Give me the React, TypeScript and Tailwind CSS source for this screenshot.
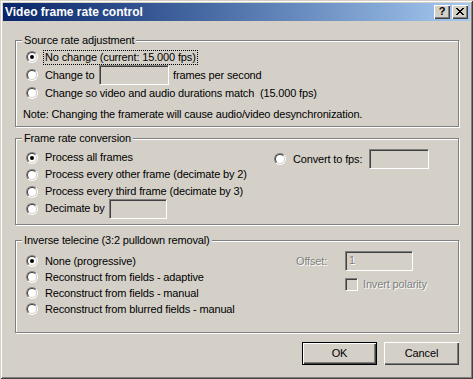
import type { ReactNode } from 'react'

const raised = 'shadow-[inset_1px_1px_0_#fff,inset_-1px_-1px_0_#404040,inset_-2px_-2px_0_#808080]'
const sunken = 'border border-t-[#808080] border-l-[#808080] border-r-white border-b-white shadow-[inset_1px_1px_0_#404040,inset_-1px_-1px_0_#d4d0c8]'
const disabledText = 'text-[#808080] [text-shadow:1px_1px_0_#fff]'

function Radio({ checked = false }: { checked?: boolean }) {
  return (
    <span className="flex h-[12px] w-[12px] shrink-0 rounded-full border border-t-[#808080] border-l-[#808080] border-r-white border-b-white">
      <span className="flex flex-1 items-center justify-center rounded-full border border-t-[#404040] border-l-[#404040] border-r-[#d4d0c8] border-b-[#d4d0c8] bg-white">
        {checked && <span className="h-[4px] w-[4px] rounded-full bg-black" />}
      </span>
    </span>
  )
}

interface ChoiceProps {
  label: string
  checked?: boolean
  focused?: boolean
  labelClass?: string
  className?: string
  children?: ReactNode
}

function Choice({ label, checked, focused, labelClass = '', className = 'h-[18px]', children }: ChoiceProps) {
  return (
    <div className={`flex items-center ${className}`}>
      <Radio checked={checked} />
      <span
        className={`ml-[5px] whitespace-pre border px-[1px] leading-[13px] ${focused ? 'border-dotted border-black' : 'border-transparent'} ${labelClass}`}
      >
        {label}
      </span>
      {children}
    </div>
  )
}

function TextBox({ className = '', value = '' }: { className?: string; value?: string }) {
  return (
    <div className={`h-[20px] shrink-0 bg-[#d4d0c8] pl-[3px] leading-[17px] ${sunken} ${className}`}>
      {value}
    </div>
  )
}

function Group({ title, className = '', children }: { title: string; className?: string; children: ReactNode }) {
  return (
    <fieldset className={`border border-[#808080] shadow-[1px_1px_0_#fff,inset_1px_1px_0_#fff] ${className}`}>
      <legend className="ml-[6px] bg-[#d4d0c8] px-[2px] leading-[13px]">{title}</legend>
      {children}
    </fieldset>
  )
}

export default function App() {
  return (
    <div className="h-[379px] w-[473px] overflow-hidden bg-[#d4d0c8] p-[3px] font-['Liberation_Sans',Arial,sans-serif] text-[11px] leading-[13px] tracking-[-0.15px] text-black shadow-[inset_1px_1px_0_#d4d0c8,inset_-1px_-1px_0_#404040,inset_2px_2px_0_#fff,inset_-2px_-2px_0_#808080]">
      {/* title bar */}
      <div className="flex h-[18px] items-center justify-between bg-linear-to-r from-[#0a246a] to-[#a6caf0] pl-[2px] pr-[2px]">
        <span className="text-[12px] font-bold tracking-normal text-white">Video frame rate control</span>
        <div className="flex gap-[2px]">
          <div className={`flex h-[14px] w-[16px] items-center justify-center bg-[#d4d0c8] pb-[1px] text-[11px] font-bold leading-none ${raised}`}>
            ?
          </div>
          <div className={`flex h-[14px] w-[16px] items-center justify-center bg-[#d4d0c8] pb-[1px] ${raised}`}>
            <svg width="8" height="7" viewBox="0 0 8 7" shapeRendering="crispEdges">
              <path d="M0 0h2l2 2.5L6 0h2L5 3.5 8 7H6L4 4.5 2 7H0l3-3.5z" fill="#000" />
            </svg>
          </div>
        </div>
      </div>

      <div className="pl-[12px] pr-[11px] pt-[13px]">
        <Group title="Source rate adjustment">
          <div className="pl-[10px] pt-[1px]">
            <Choice checked focused label="No change (current: 15.000 fps)" />
            <Choice label="Change to" labelClass="w-[56px]">
              <TextBox className="w-[70px]" />
              <span className="ml-[4px]">frames per second</span>
            </Choice>
            <Choice label="Change so video and audio durations match  (15.000 fps)" />
            <div className="-ml-[3px] flex h-[24px] items-center">
              Note: Changing the framerate will cause audio/video desynchronization.
            </div>
          </div>
        </Group>

        <Group title="Frame rate conversion" className="mt-[5px]">
          <div className="flex pb-[7px] pl-[10px] pt-[4px]">
            <div className="w-[248px]">
              <Choice className="h-[17px]" checked label="Process all frames" />
              <Choice className="h-[17px]" label="Process every other frame (decimate by 2)" />
              <Choice className="h-[17px]" label="Process every third frame (decimate by 3)" />
              <Choice className="h-[17px]" label="Decimate by" labelClass="w-[66px]">
                <TextBox className="w-[58px]" />
              </Choice>
            </div>
            <div>
              <Choice className="h-[20px]" label="Convert to fps:" labelClass="w-[78px]">
                <TextBox className="w-[60px]" />
              </Choice>
            </div>
          </div>
        </Group>

        <Group title="Inverse telecine (3:2 pulldown removal)" className="mt-[9px]">
          <div className="flex pb-[15px] pl-[10px]">
            <div className="w-[270px] pt-[6px]">
              <Choice className="h-[16px]" checked label="None (progressive)" />
              <Choice className="h-[16px]" label="Reconstruct from fields - adaptive" />
              <Choice className="h-[16px]" label="Reconstruct from fields - manual" />
              <Choice className="h-[16px]" label="Reconstruct from blurred fields - manual" />
            </div>
            <div className="pt-[4px]">
              <div className="flex h-[20px] w-[117px] items-center">
                <span className={disabledText}>Offset:</span>
                <TextBox className={`ml-auto w-[68px] ${disabledText}`} value="1" />
              </div>
              <div className="mt-[7px] flex items-center whitespace-nowrap pl-[49px]">
                <span className={`h-[13px] w-[13px] shrink-0 bg-[#d4d0c8] ${sunken}`} />
                <span className={`ml-[5px] ${disabledText}`}>Invert polarity</span>
              </div>
            </div>
          </div>
        </Group>

        <div className="mt-[9px] flex justify-end gap-[7px]">
          <button className="h-[23px] w-[75px] border border-black bg-[#d4d0c8] shadow-[inset_1px_1px_0_#fff,inset_-1px_-1px_0_#404040,inset_-2px_-2px_0_#808080]">
            OK
          </button>
          <button className={`h-[23px] w-[75px] bg-[#d4d0c8] ${raised}`}>Cancel</button>
        </div>
      </div>
    </div>
  )
}
